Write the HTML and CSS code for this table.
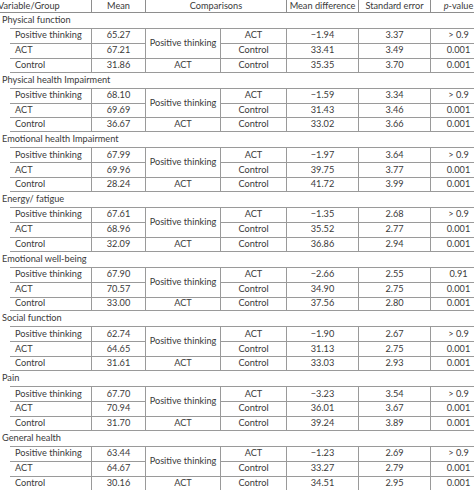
FILE: index.html
```html
<!DOCTYPE html>
<html lang="en">
<head>
<meta charset="utf-8">
<title>Table</title>
<link rel="stylesheet" href="styles.css">
</head>
<body>
<div class="tbl">
  <div class="hd">
    <div class="h h-var">Variable/Group</div>
    <div class="h">Mean</div>
    <div class="h h-cmp">Comparisons</div>
    <div class="h">Mean difference</div>
    <div class="h">Standard error</div>
    <div class="h"><i>p</i>-value</div>
  </div>

  <div class="sec">
    <div class="lbl">Physical function</div>
    <div class="c ind"></div><div class="c grp">Positive thinking</div><div class="c">65.27</div><div class="c span2">Positive thinking</div><div class="c">ACT</div><div class="c">−1.94</div><div class="c">3.37</div><div class="c">&gt; 0.9</div>
    <div class="c ind"></div><div class="c grp">ACT</div><div class="c">67.21</div><div class="c">Control</div><div class="c">33.41</div><div class="c">3.49</div><div class="c">0.001</div>
    <div class="c ind last"></div><div class="c grp last">Control</div><div class="c last">31.86</div><div class="c last">ACT</div><div class="c last">Control</div><div class="c last">35.35</div><div class="c last">3.70</div><div class="c last">0.001</div>
  </div>

  <div class="sec">
    <div class="lbl">Physical health Impairment</div>
    <div class="c ind"></div><div class="c grp">Positive thinking</div><div class="c">68.10</div><div class="c span2">Positive thinking</div><div class="c">ACT</div><div class="c">−1.59</div><div class="c">3.34</div><div class="c">&gt; 0.9</div>
    <div class="c ind"></div><div class="c grp">ACT</div><div class="c">69.69</div><div class="c">Control</div><div class="c">31.43</div><div class="c">3.46</div><div class="c">0.001</div>
    <div class="c ind last"></div><div class="c grp last">Control</div><div class="c last">36.67</div><div class="c last">ACT</div><div class="c last">Control</div><div class="c last">33.02</div><div class="c last">3.66</div><div class="c last">0.001</div>
  </div>

  <div class="sec">
    <div class="lbl">Emotional health Impairment</div>
    <div class="c ind"></div><div class="c grp">Positive thinking</div><div class="c">67.99</div><div class="c span2">Positive thinking</div><div class="c">ACT</div><div class="c">−1.97</div><div class="c">3.64</div><div class="c">&gt; 0.9</div>
    <div class="c ind"></div><div class="c grp">ACT</div><div class="c">69.96</div><div class="c">Control</div><div class="c">39.75</div><div class="c">3.77</div><div class="c">0.001</div>
    <div class="c ind last"></div><div class="c grp last">Control</div><div class="c last">28.24</div><div class="c last">ACT</div><div class="c last">Control</div><div class="c last">41.72</div><div class="c last">3.99</div><div class="c last">0.001</div>
  </div>

  <div class="sec">
    <div class="lbl">Energy/ fatigue</div>
    <div class="c ind"></div><div class="c grp">Positive thinking</div><div class="c">67.61</div><div class="c span2">Positive thinking</div><div class="c">ACT</div><div class="c">−1.35</div><div class="c">2.68</div><div class="c">&gt; 0.9</div>
    <div class="c ind"></div><div class="c grp">ACT</div><div class="c">68.96</div><div class="c">Control</div><div class="c">35.52</div><div class="c">2.77</div><div class="c">0.001</div>
    <div class="c ind last"></div><div class="c grp last">Control</div><div class="c last">32.09</div><div class="c last">ACT</div><div class="c last">Control</div><div class="c last">36.86</div><div class="c last">2.94</div><div class="c last">0.001</div>
  </div>

  <div class="sec">
    <div class="lbl">Emotional well-being</div>
    <div class="c ind"></div><div class="c grp">Positive thinking</div><div class="c">67.90</div><div class="c span2">Positive thinking</div><div class="c">ACT</div><div class="c">−2.66</div><div class="c">2.55</div><div class="c">0.91</div>
    <div class="c ind"></div><div class="c grp">ACT</div><div class="c">70.57</div><div class="c">Control</div><div class="c">34.90</div><div class="c">2.75</div><div class="c">0.001</div>
    <div class="c ind last"></div><div class="c grp last">Control</div><div class="c last">33.00</div><div class="c last">ACT</div><div class="c last">Control</div><div class="c last">37.56</div><div class="c last">2.80</div><div class="c last">0.001</div>
  </div>

  <div class="sec">
    <div class="lbl">Social function</div>
    <div class="c ind"></div><div class="c grp">Positive thinking</div><div class="c">62.74</div><div class="c span2">Positive thinking</div><div class="c">ACT</div><div class="c">−1.90</div><div class="c">2.67</div><div class="c">&gt; 0.9</div>
    <div class="c ind"></div><div class="c grp">ACT</div><div class="c">64.65</div><div class="c">Control</div><div class="c">31.13</div><div class="c">2.75</div><div class="c">0.001</div>
    <div class="c ind last"></div><div class="c grp last">Control</div><div class="c last">31.61</div><div class="c last">ACT</div><div class="c last">Control</div><div class="c last">33.03</div><div class="c last">2.93</div><div class="c last">0.001</div>
  </div>

  <div class="sec">
    <div class="lbl">Pain</div>
    <div class="c ind"></div><div class="c grp">Positive thinking</div><div class="c">67.70</div><div class="c span2">Positive thinking</div><div class="c">ACT</div><div class="c">−3.23</div><div class="c">3.54</div><div class="c">&gt; 0.9</div>
    <div class="c ind"></div><div class="c grp">ACT</div><div class="c">70.94</div><div class="c">Control</div><div class="c">36.01</div><div class="c">3.67</div><div class="c">0.001</div>
    <div class="c ind last"></div><div class="c grp last">Control</div><div class="c last">31.70</div><div class="c last">ACT</div><div class="c last">Control</div><div class="c last">39.24</div><div class="c last">3.89</div><div class="c last">0.001</div>
  </div>

  <div class="sec">
    <div class="lbl">General health</div>
    <div class="c ind"></div><div class="c grp">Positive thinking</div><div class="c">63.44</div><div class="c span2">Positive thinking</div><div class="c">ACT</div><div class="c">−1.23</div><div class="c">2.69</div><div class="c">&gt; 0.9</div>
    <div class="c ind"></div><div class="c grp">ACT</div><div class="c">64.67</div><div class="c">Control</div><div class="c">33.27</div><div class="c">2.79</div><div class="c">0.001</div>
    <div class="c ind last"></div><div class="c grp last">Control</div><div class="c last">30.16</div><div class="c last">ACT</div><div class="c last">Control</div><div class="c last">34.51</div><div class="c last">2.95</div><div class="c last">0.001</div>
  </div>
</div>
</body>
</html>
```

FILE: styles.css
```css
html, body {
  margin: 0;
  padding: 0;
  background: #ffffff;
}

body {
  width: 474px;
  height: 490px;
  overflow: hidden;
  font-family: Lato, "Liberation Sans", sans-serif;
  font-size: 9.2px;
  line-height: 10px;
  color: #3a3a3a;
}

.tbl {
  width: 486px;
  display: flex;
  flex-direction: column;
}

.hd,
.sec {
  display: grid;
  grid-template-columns: 10px 81px 54px 75px 66px 72px 72px 56px;
}

.hd {
  height: 13px;
  box-sizing: border-box;
  border-bottom: 1px solid #8e8e8e;
}

.h {
  display: flex;
  align-items: center;
  justify-content: center;
  padding-bottom: 1px;
  border-left: 1px solid #8e8e8e;
  white-space: nowrap;
}

.h-var {
  grid-column: span 2;
  justify-content: flex-start;
  border-left: none;
  margin-left: -2px;
}

.h-cmp {
  grid-column: span 2;
}

.sec {
  grid-template-rows: 14.93px 14.93px 14.93px 14.93px;
}

.lbl {
  grid-column: 1 / -1;
  display: flex;
  align-items: center;
  padding-left: 2px;
  padding-bottom: 1px;
  white-space: nowrap;
}

.c {
  box-sizing: border-box;
  display: flex;
  align-items: center;
  justify-content: center;
  border-top: 1px solid #9a9a9a;
  border-left: 1px solid #9a9a9a;
  padding-bottom: 1px;
  white-space: nowrap;
}

.c.last {
  border-bottom: 1px solid #9a9a9a;
}

.c.ind {
  border: none;
}

.c.grp {
  justify-content: flex-start;
  padding-left: 5px;
  border-left: none;
}

.c.span2 {
  grid-row: span 2;
}
```
